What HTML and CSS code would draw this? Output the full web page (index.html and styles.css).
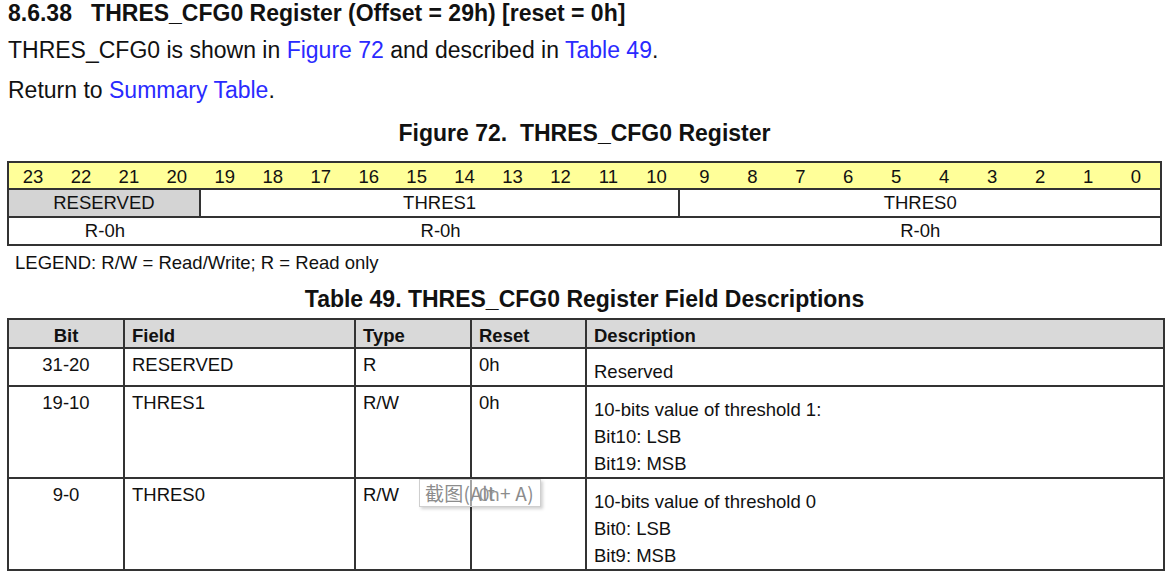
FILE: index.html
```html
<!DOCTYPE html>
<html>
<head>
<meta charset="utf-8">
<link rel="stylesheet" href="styles.css">
</head>
<body>
<div class="page">
  <h1 class="heading">8.6.38&nbsp;&nbsp;&nbsp;THRES_CFG0 Register (Offset = 29h) [reset = 0h]</h1>
  <p class="para first">THRES_CFG0 is shown in <span class="link">Figure 72</span> and described in <span class="link">Table 49</span>.</p>
  <p class="para second">Return to <span class="link">Summary Table</span>.</p>

  <div class="fig-title">Figure 72.&nbsp; THRES_CFG0 Register</div>
  <div class="reg">
    <div class="reg-row bits">
      <span>23</span><span>22</span><span>21</span><span>20</span><span>19</span><span>18</span><span>17</span><span>16</span><span>15</span><span>14</span><span>13</span><span>12</span><span>11</span><span>10</span><span>9</span><span>8</span><span>7</span><span>6</span><span>5</span><span>4</span><span>3</span><span>2</span><span>1</span><span>0</span>
    </div>
    <div class="reg-row fields">
      <span class="f4 reserved">RESERVED</span>
      <span class="f10 divided">THRES1</span>
      <span class="f10">THRES0</span>
    </div>
    <div class="reg-row access">
      <span class="f4">R-0h</span>
      <span class="f10">R-0h</span>
      <span class="f10">R-0h</span>
    </div>
  </div>
  <div class="legend">LEGEND: R/W = Read/Write; R = Read only</div>

  <div class="tbl-title">Table 49. THRES_CFG0 Register Field Descriptions</div>
  <div class="tbl-wrap">
    <table class="fields-table">
      <colgroup>
        <col class="c-bit"><col class="c-field"><col class="c-type"><col class="c-reset"><col class="c-desc">
      </colgroup>
      <thead>
        <tr><th class="center">Bit</th><th>Field</th><th>Type</th><th>Reset</th><th>Description</th></tr>
      </thead>
      <tbody>
        <tr class="r-short">
          <td class="center">31-20</td><td>RESERVED</td><td>R</td><td>0h</td>
          <td class="desc"><div>Reserved</div></td>
        </tr>
        <tr class="r-tall">
          <td class="center">19-10</td><td>THRES1</td><td>R/W</td><td>0h</td>
          <td class="desc"><div>10-bits value of threshold 1:</div><div>Bit10: LSB</div><div>Bit19: MSB</div></td>
        </tr>
        <tr class="r-tall">
          <td class="center">9-0</td><td>THRES0</td><td>R/W</td><td>0h</td>
          <td class="desc"><div>10-bits value of threshold 0</div><div>Bit0: LSB</div><div>Bit9: MSB</div></td>
        </tr>
      </tbody>
    </table>
    <div class="tooltip">截图(Alt + A)</div>
  </div>
</div>
</body>
</html>
```

FILE: styles.css
```css
* { box-sizing: border-box; }
html, body { margin: 0; padding: 0; background: #fff; }
body {
  font-family: "Liberation Sans", Arial, sans-serif;
  color: #111;
}
.page {
  width: 1168px;
  padding: 0 6px 0 7px;
}
.heading {
  margin: 0;
  padding-left: 1px;
  font-size: 23px;
  font-weight: bold;
  line-height: 26px;
}
.para {
  margin: 0;
  padding-left: 1px;
  font-size: 23px;
  line-height: 26px;
}
.para.first { margin-top: 11px; }
.para.second { margin-top: 14px; }
.link { color: #2a2aff; }

.fig-title {
  margin-top: 18px;
  text-align: center;
  font-size: 23px;
  font-weight: bold;
  line-height: 24px;
}
.reg {
  margin-top: 16px;
  width: 1155px;
  border: 2px solid #333;
  font-size: 18.5px;
}
.reg-row {
  display: grid;
  grid-template-columns: repeat(24, 1fr);
  text-align: center;
}
.reg-row.bits {
  background: #ffff99;
  height: 27px;
  line-height: 27px;
  border-bottom: 2px solid #333;
}
.reg-row.fields {
  height: 28px;
  line-height: 26px;
  border-bottom: 2px solid #333;
}
.reg-row.access {
  height: 26px;
  line-height: 26px;
}
.f4 { grid-column: span 4; }
.f10 { grid-column: span 10; }
.reserved { background: #d4d4d4; border-right: 2px solid #333; }
.divided { border-right: 2px solid #333; }

.legend {
  margin-top: 6px;
  padding-left: 8px;
  font-size: 18.5px;
  line-height: 22px;
}
.tbl-title {
  margin-top: 12px;
  text-align: center;
  font-size: 23px;
  font-weight: bold;
  line-height: 26px;
}
.tbl-wrap {
  position: relative;
  margin-top: 6px;
  width: 1156px;
}
.fields-table {
  width: 1156px;
  table-layout: fixed;
  border-collapse: collapse;
  font-size: 18.5px;
  border: 2px solid #333;
}
.c-bit { width: 116px; }
.c-field { width: 231px; }
.c-type { width: 116px; }
.c-reset { width: 115px; }
.c-desc { width: 578px; }
.fields-table th, .fields-table td {
  border: 2px solid #333;
  text-align: left;
  vertical-align: top;
  padding: 5px 7px 0 7px;
  line-height: 22px;
}
.fields-table th {
  background: #d9d9d9;
  height: 29px;
  padding-top: 5px;
  font-weight: bold;
}
.fields-table .center { text-align: center; }
.r-short td { height: 37px; }
.r-tall td { height: 92px; }
.fields-table td.desc { padding-top: 9px; }
.desc div { line-height: 27px; }

.tooltip {
  position: absolute;
  left: 412px;
  top: 161px;
  width: 122px;
  height: 28px;
  padding-left: 5px;
  font-family: "Noto Sans CJK SC", "Liberation Sans", sans-serif;
  font-size: 19px;
  letter-spacing: 0.3px;
  line-height: 26px;
  color: #8c8c8c;
  background: rgba(255,255,255,0.55);
  border: 1px solid #cfcfcf;
  box-shadow: 2px 2px 3px rgba(0,0,0,0.18);
  white-space: nowrap;
}
```
